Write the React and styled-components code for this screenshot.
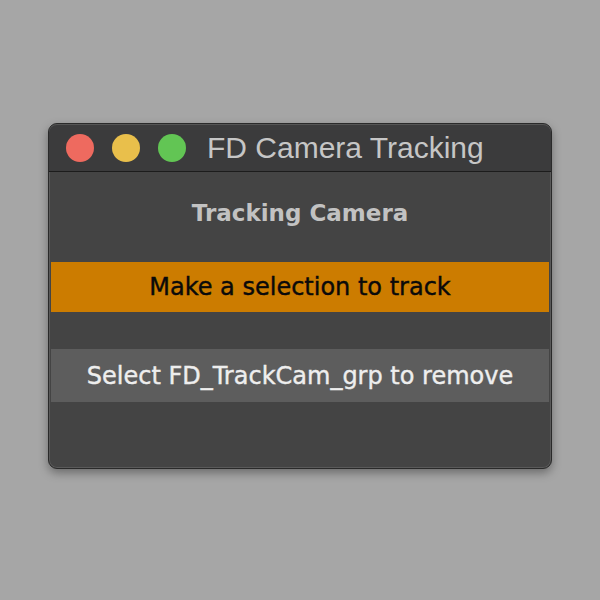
import React from "react";
import styled, { createGlobalStyle } from "styled-components";

const GlobalStyle = createGlobalStyle`
  html, body {
    margin: 0;
    padding: 0;
    background: #a6a6a6;
  }
  #root {
    width: 600px;
    height: 600px;
  }
`;

const Stage = styled.div`
  width: 600px;
  height: 600px;
  display: flex;
  align-items: flex-start;
  padding: 123px 0 0 48px;
  box-sizing: border-box;
`;

const Window = styled.div`
  width: 504px;
  height: 346px;
  box-sizing: border-box;
  background: #444444;
  border: 1px solid #2a2a2a;
  border-radius: 9px;
  box-shadow: inset 0 0 0 1px #5a5a5a, 0 4px 10px rgba(0, 0, 0, 0.35);
  display: flex;
  flex-direction: column;
  overflow: hidden;
`;

const TitleBar = styled.div`
  height: 47px;
  flex: none;
  display: flex;
  align-items: center;
  padding-left: 17px;
  gap: 18px;
  background: #3b3b3c;
  border-bottom: 1px solid #1c1c1c;
  border-radius: 8px 8px 0 0;
  box-shadow: inset 0 1px 0 #555;
`;

const Light = styled.span`
  width: 28px;
  height: 28px;
  border-radius: 50%;
  background: ${(p) => p.color};
  flex: none;
`;

const Title = styled.div`
  font-family: "Liberation Sans", Arial, sans-serif;
  font-size: 30px;
  color: #c6c6c6;
  margin-left: 3px;
`;

const Body = styled.div`
  flex: 1;
  display: flex;
  flex-direction: column;
  padding: 0 2px;
`;

const Heading = styled.div`
  height: 90px;
  box-sizing: border-box;
  padding-bottom: 8px;
  display: flex;
  align-items: center;
  justify-content: center;
  font-family: "DejaVu Sans", Verdana, sans-serif;
  font-weight: bold;
  font-size: 23px;
  color: #c2c2c2;
`;

const Bar = styled.div`
  height: ${(p) => p.h}px;
  display: flex;
  align-items: center;
  justify-content: center;
  font-family: "DejaVu Sans", Verdana, sans-serif;
  font-size: 24px;
  -webkit-text-stroke: 0.4px ${(p) => p.fg};
  background: ${(p) => p.bg};
  color: ${(p) => p.fg};
  margin-bottom: ${(p) => p.mb || 0}px;
`;

export default function App() {
  return (
    <>
      <GlobalStyle />
      <Stage>
        <Window>
          <TitleBar>
            <Light color="#ee6a5f" />
            <Light color="#e9bf4b" />
            <Light color="#62c554" />
            <Title>FD Camera Tracking</Title>
          </TitleBar>
          <Body>
            <Heading>Tracking Camera</Heading>
            <Bar h={50} mb={37} bg="#cc7c00" fg="#0a0a0a">
              Make a selection to track
            </Bar>
            <Bar h={53} bg="#5d5d5d" fg="#eeeeee">
              Select FD_TrackCam_grp to remove
            </Bar>
          </Body>
        </Window>
      </Stage>
    </>
  );
}
